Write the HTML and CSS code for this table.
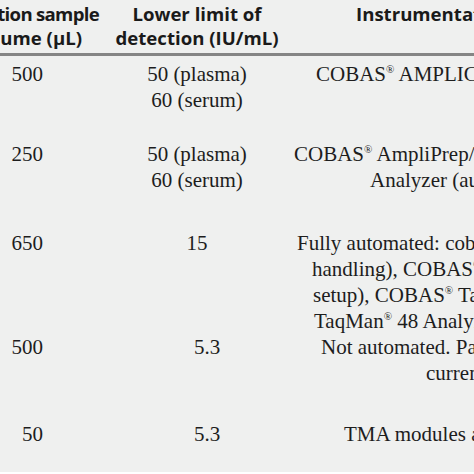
FILE: index.html
```html
<!DOCTYPE html>
<html>
<head>
<meta charset="utf-8">
<link rel="stylesheet" href="styles.css">
</head>
<body>
<div class="page">
  <div class="table">
    <div class="head">
      <div class="c1">
        <span class="hl h1a">Extraction sample</span>
        <span class="hl h1b">volume (μL)</span>
      </div>
      <div class="c2">
        <span class="hl">Lower limit of</span>
        <span class="hl">detection (IU/mL)</span>
      </div>
      <div class="c3">
        <span class="hl h3">Instrumentation and automation</span>
      </div>
    </div>
    <div class="row r1">
      <div class="c1">500</div>
      <div class="c2"><span class="ln">50 (plasma)</span><span class="ln">60 (serum)</span></div>
      <div class="c3"><span class="ln i-r1">COBAS<sup>®</sup> AMPLICOR<sup>®</sup> Analyzer</span></div>
    </div>
    <div class="row r2">
      <div class="c1">250</div>
      <div class="c2"><span class="ln">50 (plasma)</span><span class="ln">60 (serum)</span></div>
      <div class="c3"><span class="ln i-r2a">COBAS<sup>®</sup> AmpliPrep/COBAS<sup>®</sup> AMPLICOR<sup>®</sup></span><span class="ln i-r2b">Analyzer (automated)</span></div>
    </div>
    <div class="row r3">
      <div class="c1">650</div>
      <div class="c2"><span class="ln">15</span></div>
      <div class="c3"><span class="ln i-r3a">Fully automated: cobas<sup>®</sup> p 630 (sample</span><span class="ln i-r3b">handling), COBAS<sup>®</sup> AmpliPrep (PCR</span><span class="ln i-r3c">setup), COBAS<sup>®</sup> TaqMan<sup>®</sup> or COBAS<sup>®</sup></span><span class="ln i-r3d">TaqMan<sup>®</sup> 48 Analyzer</span></div>
    </div>
    <div class="row r4">
      <div class="c1">500</div>
      <div class="c2"><span class="ln d53">5.3</span></div>
      <div class="c3"><span class="ln i-r4a">Not automated. Partial automation</span><span class="ln i-r4b">currently</span></div>
    </div>
    <div class="row r5">
      <div class="c1">50</div>
      <div class="c2"><span class="ln d53">5.3</span></div>
      <div class="c3"><span class="ln i-r5">TMA modules available</span></div>
    </div>
  </div>
</div>
</body>
</html>
```
FILE: styles.css
```css
html, body {
  margin: 0;
  padding: 0;
  background: #ffffff;
}
.page {
  width: 474px;
  height: 472px;
  overflow: hidden;
  background: #eff0ef;
  color: #1d1d1d;
}
.table {
  display: flex;
  flex-direction: column;
}
.head, .row {
  display: grid;
  grid-template-columns: 110px 174px 190px;
}
.head {
  font-family: "Open Sans", "DejaVu Sans", sans-serif;
  font-weight: 700;
  font-size: 18.6px;
  line-height: 24px;
  padding: 2px 0 3px;
  border-bottom: 3px solid #858585;
  color: #1a1a1a;
}
.hl {
  display: block;
  white-space: nowrap;
}
.head .c1 {
  display: flex;
  flex-direction: column;
  align-items: flex-end;
}
.h1a { padding-right: 11px; letter-spacing: -0.7px; }
.h1b { padding-right: 28px; }
.head .c2 {
  display: flex;
  flex-direction: column;
  align-items: center;
}
.h3 { padding-left: 72px; }
.row {
  font-family: "Liberation Serif", "Times New Roman", serif;
  font-size: 21px;
  line-height: 26px;
}
.row .c1 {
  text-align: right;
  padding-right: 67px;
}
.row .c2 {
  text-align: center;
  display: flex;
  flex-direction: column;
}
.row .c3 {
  display: flex;
  flex-direction: column;
  white-space: nowrap;
}
.ln {
  display: block;
  white-space: nowrap;
}
sup {
  font-size: 11px;
  line-height: 0;
  vertical-align: 8px;
}
.d53 { padding-left: 20px; }
.r1 { padding-top: 5px; padding-bottom: 28px; }
.r2 { padding-bottom: 37px; }
.r3 { padding-bottom: 0; }
.r4 { padding-bottom: 35px; }
.i-r1 { padding-left: 32px; }
.i-r2a { padding-left: 10px; }
.i-r2b { padding-left: 86px; }
.i-r3a { padding-left: 13px; }
.i-r3b { padding-left: 28px; }
.i-r3c { padding-left: 29px; }
.i-r3d { padding-left: 30px; }
.i-r4a { padding-left: 37px; }
.i-r4b { padding-left: 142px; }
.i-r5 { padding-left: 60px; }
```
